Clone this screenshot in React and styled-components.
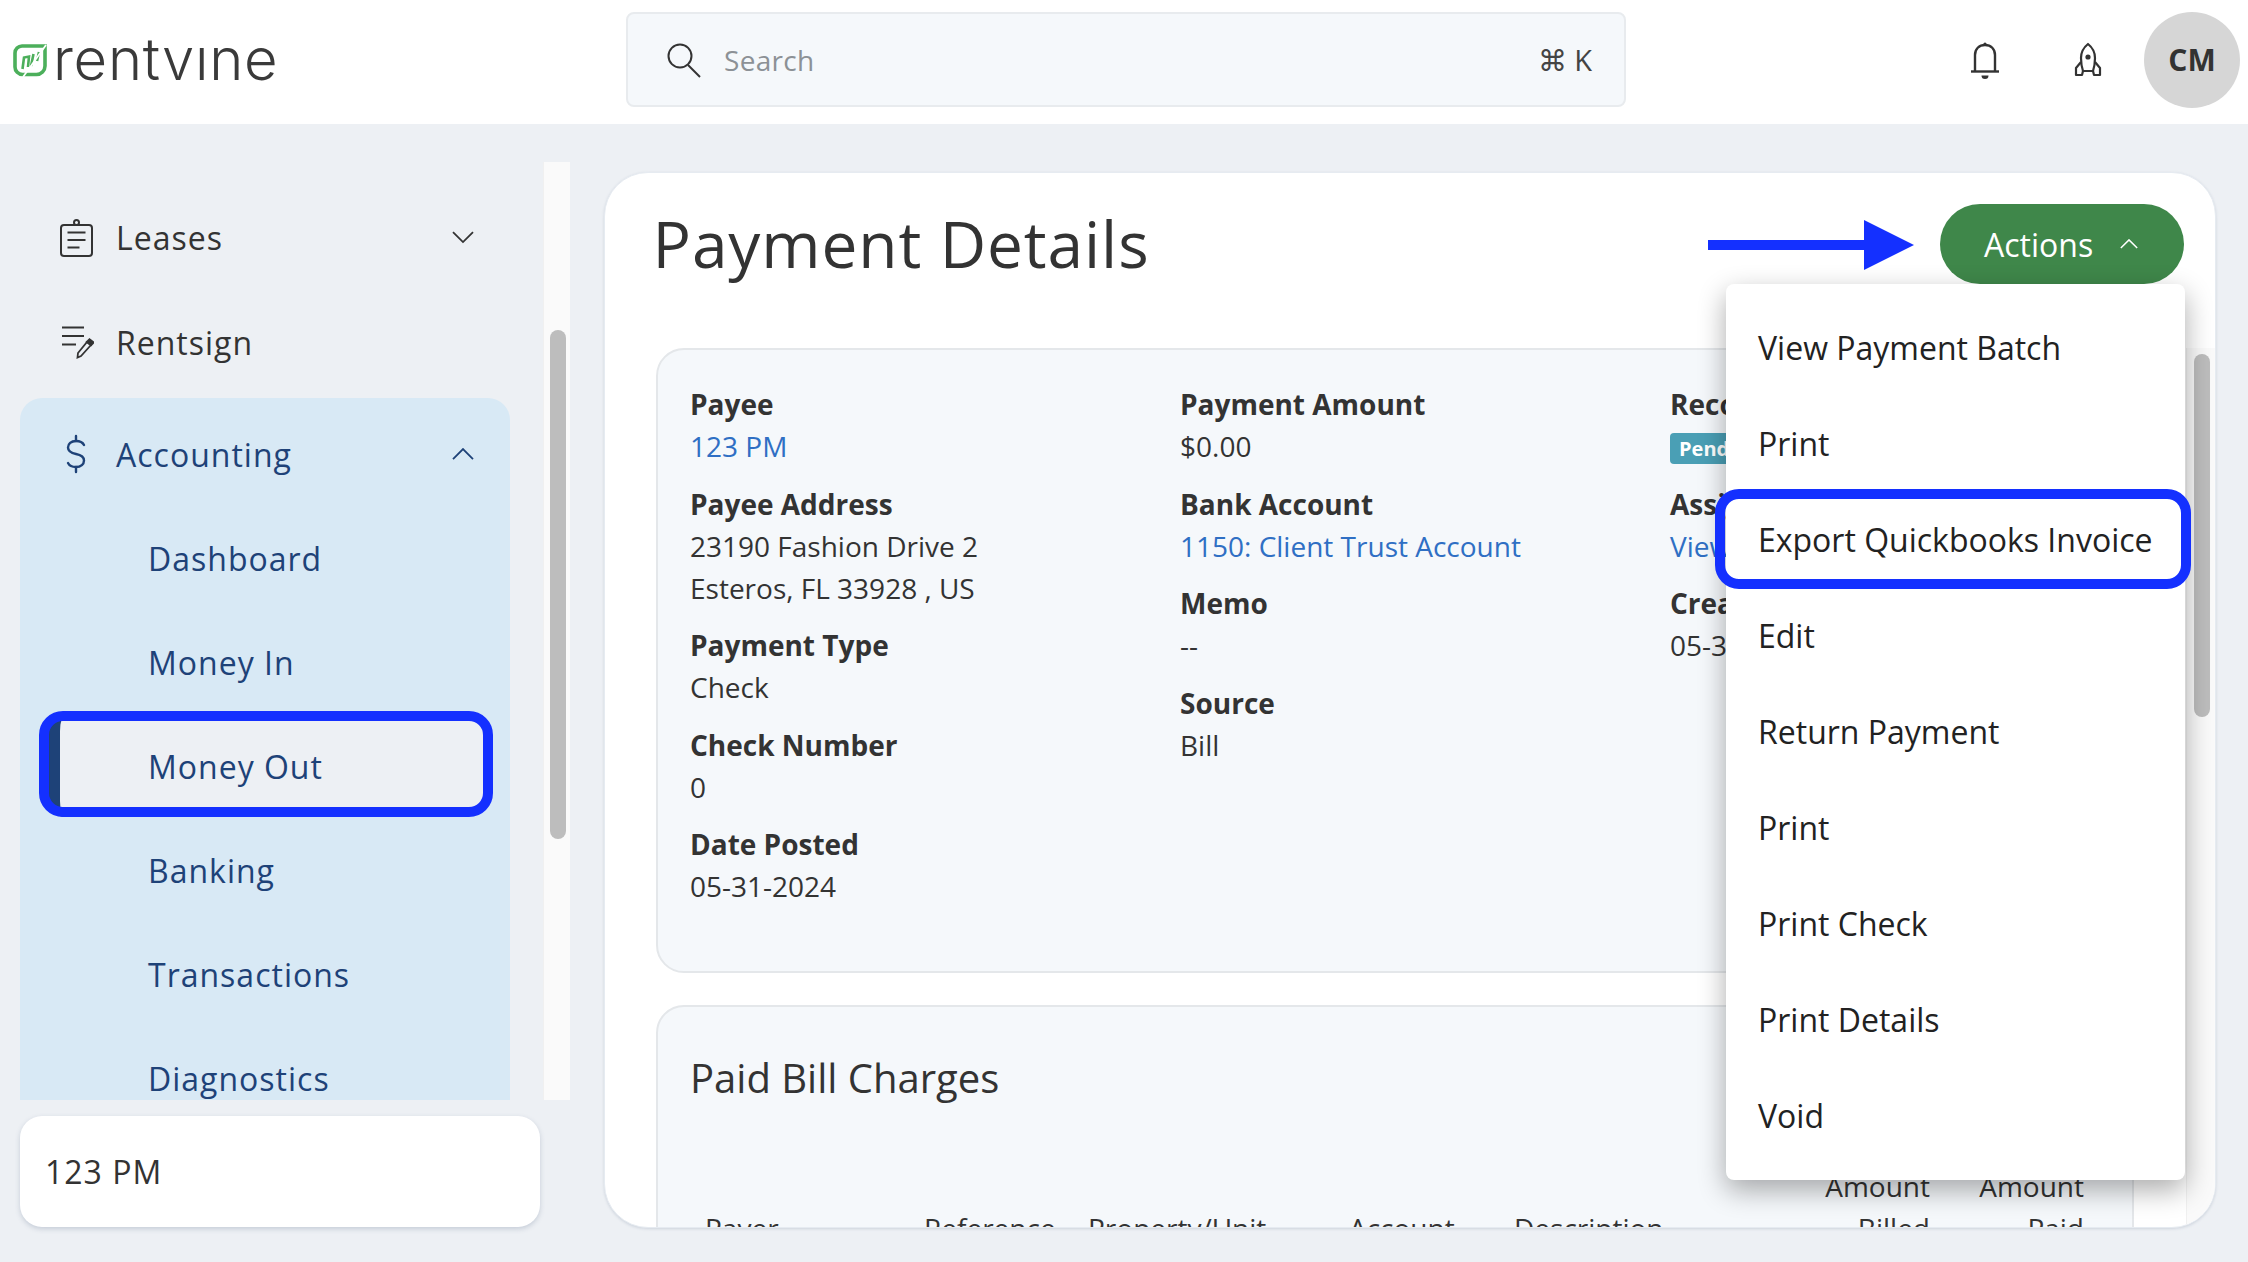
import React from "react";
import styled, { createGlobalStyle } from "styled-components";

const GlobalStyle = createGlobalStyle`
  * {
    box-sizing: border-box;
  }
  html,
  body {
    margin: 0;
    width: 2248px;
    height: 1262px;
    overflow: hidden;
    background: #edf0f4;
    color: #333;
    font-family: "Open Sans", "Noto Sans", sans-serif;
  }
`;

const LeafMark = () => (
  <svg width="34" height="36" viewBox="0 0 34 36" fill="none">
    <path
      d="M9 4H32V24a8.500 8.500 0 0 1-8.500 8.500H9.500A7.500 7.500 0 0 1 2 25V11a7 7 0 0 1 7-7Z"
      stroke="#4caf5b"
      strokeWidth="3.6"
    />
    <path d="M9.500 27 11 15.500l5-1L15 25" stroke="#4caf5b" strokeWidth="2.6" />
    <path d="M18 24l2.500-12M24 19l2-9" stroke="#4caf5b" strokeWidth="2.6" />
    <path d="M33 3 10 35" stroke="#fff" strokeWidth="1.8" />
  </svg>
);

const SearchIcon = () => (
  <svg width="36" height="36" viewBox="0 0 36 36" fill="none" stroke="#333" strokeWidth="2">
    <circle cx="14" cy="14" r="11.5" />
    <path d="M22 23 34 35" />
  </svg>
);

const BellIcon = () => (
  <svg width="30" height="38" viewBox="0 0 30 38" fill="none" stroke="#333" strokeWidth="2.4">
    <path d="M5 30V14C5 8 9 4 15 4s10 4 10 10v16" />
    <path d="M1 30.500h28" />
    <circle cx="15" cy="3" r="1.6" fill="#333" stroke="none" />
    <path d="M11.500 34.500h7a3.500 3.500 0 0 1-7 0Z" fill="#333" stroke="none" />
  </svg>
);

const RocketIcon = () => (
  <svg width="28" height="36" viewBox="0 0 28 36" fill="none" stroke="#333" strokeWidth="2.2" strokeLinejoin="round">
    <path d="M14 2c-5 4-7 9-7 14 0 5 1 10 2 13h10c1-3 2-8 2-13 0-5-2-10-7-14Z" />
    <path d="M7 20l-5 6v7h6l1-4M21 20l5 6v7h-6l-1-4" />
    <circle cx="14" cy="15" r="2.6" fill="#333" stroke="none" />
  </svg>
);

const LeasesIcon = () => (
  <svg width="36" height="40" viewBox="0 0 36 40" fill="none" stroke="#333" strokeWidth="2">
    <rect x="3" y="7" width="31" height="31" rx="3" />
    <circle cx="18.500" cy="4.500" r="2.500" />
    <path d="M9.500 14.500h18M9.500 22h18M9.500 29.500h12" strokeWidth="2.2" />
  </svg>
);

const RentsignIcon = () => (
  <svg width="36" height="36" viewBox="-2 0 36 36" fill="none" stroke="#333" strokeWidth="2.2">
    <path d="M2 2.500h22M2 11h22M2 19.500h14" />
    <path d="M18 28l9-11 4 3-10 11-3.500 1.500Z" strokeWidth="1.8" />
    <path d="M27 17l2.500-2.500 4 3-2.500 2.500Z" fill="#333" />
  </svg>
);

const DollarIcon = () => (
  <svg width="36" height="40" viewBox="-1 0 36 40" fill="none" stroke="#1e4278" strokeWidth="2.4" strokeLinecap="round">
    <path d="M17 2v5M17 33v5" />
    <path d="M25 11c-1-2-4-4-8-4-5 0-8 3-8 6.500S12 19 17 20s8 3 8 6.500S22 33 17 33c-4 0-7-2-8-4" />
  </svg>
);

const Chevron = ({ up, color = "#333", size = 22 }) => (
  <svg width={size} height={size * 0.55} viewBox="0 0 22 12" fill="none" stroke={color} strokeWidth="1.8">
    <path d={up ? "M1 11 11 1l10 10" : "M1 1l10 10L21 1"} />
  </svg>
);

const Page = styled.div`
  width: 2248px;
  height: 1262px;
  display: flex;
  flex-direction: column;
`;

const TopBar = styled.header`
  height: 124px;
  flex: none;
  display: flex;
  align-items: center;
  padding-bottom: 5px;
  background: #fff;
`;

const LogoBlock = styled.div`
  width: 626px;
  height: 100%;
  flex: none;
  display: flex;
  align-items: center;
  gap: 6px;
  padding-left: 13px;
`;

const LogoWord = styled.span`
  font-family: "Inter", "Lato", sans-serif;
  font-size: 58px;
  line-height: 62px;
  font-weight: 300;
  letter-spacing: 0.7px;
  color: #3a3a3a;
  margin-top: -1px;
`;

const SearchBox = styled.div`
  width: 1000px;
  height: 95px;
  flex: none;
  display: flex;
  align-items: center;
  padding: 0 32px 0 38px;
  background: #f5f8fb;
  border: 2px solid #e8ebee;
  border-radius: 8px;
`;

const SearchText = styled.span`
  flex: 1;
  margin-left: 22px;
  font-size: 28px;
  letter-spacing: 0.3px;
  color: #8c9196;
`;

const Shortcut = styled.span`
  font-size: 29px;
  color: #444;
`;

const TopActions = styled.div`
  flex: 1;
  display: flex;
  align-items: center;
  justify-content: flex-end;
  padding-right: 8px;
`;

const TopIcon = styled.span`
  display: flex;
  margin-right: ${(p) => p.$gap}px;
`;

const Avatar = styled.div`
  width: 96px;
  height: 96px;
  display: flex;
  align-items: center;
  justify-content: center;
  border-radius: 50%;
  background: #d6d6d6;
  font-size: 30px;
  font-weight: 700;
  color: #333;
`;

const Body = styled.div`
  flex: 1;
  display: flex;
  min-height: 0;
`;

const Sidebar = styled.aside`
  width: 604px;
  flex: none;
  padding: 38px 0 0 20px;
`;

const NavScroller = styled.div`
  height: 938px;
  display: flex;
  gap: 33px;
`;

const NavList = styled.nav`
  width: 490px;
  flex: none;
  padding-top: 23px;
  overflow: hidden;
`;

const NavRow = styled.div`
  height: ${(p) => (p.$accent ? 104.5 : 105)}px;
  display: flex;
  align-items: center;
  padding: 0 36px 0 38px;
  font-size: 32px;
  letter-spacing: 1px;
  color: ${(p) => (p.$accent ? "#1e4278" : "#333")};
`;

const NavIcon = styled.span`
  width: 58px;
  flex: none;
  display: flex;
`;

const NavLabel = styled.span`
  flex: 1;
`;

const NavGroup = styled.div`
  margin-top: 3px;
  padding-top: 4px;
  background: #d8e9f5;
  border-radius: 22px 22px 0 0;
`;

const SubRow = styled.div`
  position: relative;
  height: ${(p) => (p.$active ? 102 : 104)}px;
  display: flex;
  align-items: center;
  padding: ${(p) => (p.$active ? "2px 0 0 88px" : "0 0 0 128px")};
  margin: 0 ${(p) => (p.$active ? 27 : 0)}px ${(p) => (p.$active ? 2 : 0)}px ${(p) => (p.$active ? 29 : 0)}px;
  font-size: 32px;
  letter-spacing: 1px;
  color: #1e4278;
  background: ${(p) => (p.$active ? "#edf0f4" : "transparent")};
  border-left: ${(p) => (p.$active ? "11px solid #1e4278" : "none")};
  border-radius: ${(p) => (p.$active ? 16 : 0)}px;
`;

const CalloutRing = styled.span`
  position: absolute;
  top: ${(p) => p.$top}px;
  right: ${(p) => p.$right}px;
  bottom: ${(p) => p.$bottom}px;
  left: ${(p) => p.$left}px;
  border: 10px solid #1430ff;
  border-radius: 24px;
  pointer-events: none;
`;

const ScrollTrack = styled.div`
  width: ${(p) => p.$width}px;
  flex: none;
  padding: ${(p) => p.$top}px 0 0 ${(p) => p.$left}px;
  background: #fafafa;
  border-left: 1px solid #f0f0f0;
`;

const ScrollThumb = styled.div`
  width: 16px;
  height: ${(p) => p.$height}px;
  border-radius: 8px;
  background: #bdbdbd;
`;

const UserCard = styled.div`
  width: 520px;
  height: 111px;
  margin-top: 16px;
  display: flex;
  align-items: center;
  padding-left: 25px;
  background: #fff;
  border-radius: 22px;
  box-shadow: 0 2px 5px rgba(80, 100, 130, 0.25);
  font-size: 32px;
  letter-spacing: 1px;
  color: #333;
`;

const MainCard = styled.main`
  width: 1612px;
  height: 1056px;
  margin-top: 48px;
  display: flex;
  flex-direction: column;
  background: #fff;
  border: 1px solid #e6ebf1;
  border-radius: 44px;
  box-shadow: 0 1px 3px rgba(80, 100, 130, 0.2);
  overflow: hidden;
`;

const CardHead = styled.div`
  height: 175px;
  flex: none;
  display: flex;
  justify-content: space-between;
  align-items: flex-start;
  padding: 31px 31px 0 47.500px;
`;

const PageTitle = styled.h1`
  margin: -4px 0 0;
  font-size: 64px;
  line-height: 88px;
  font-weight: 400;
  letter-spacing: 0.9px;
  color: #333;
`;

const ActionsWrap = styled.div`
  position: relative;
  width: 244px;
  height: 80px;
`;

const ActionsButton = styled.button`
  width: 100%;
  height: 100%;
  display: flex;
  align-items: center;
  gap: 27px;
  padding: 0 0 0 44px;
  border: 0;
  border-radius: 40px;
  background: #3f874a;
  color: #fff;
  font-family: inherit;
  font-size: 32px;
`;

const ArrowMark = styled.svg`
  position: absolute;
  top: 16px;
  left: -232px;
`;

const Menu = styled.div`
  position: absolute;
  top: 80px;
  right: -1px;
  width: 459px;
  padding: 15px 0 17px;
  background: #fff;
  border-radius: 8px;
  box-shadow: 0 10px 28px rgba(0, 0, 0, 0.33);
  z-index: 2;
`;

const MenuItem = styled.div`
  position: relative;
  height: 96px;
  display: flex;
  align-items: center;
  padding-left: 32px;
  font-size: 32px;
  color: #222;
`;

const CardBody = styled.div`
  flex: 1;
  display: flex;
  min-height: 0;
`;

const Content = styled.div`
  flex: 1;
  padding: 0 52px 0 51px;
  overflow: hidden;
`;

const InfoPanel = styled.section`
  height: 625px;
  display: grid;
  grid-template-columns: repeat(3, 490px);
  padding: 33px 0 0 32px;
  background: #f5f8fb;
  border: 2px solid #e4e7ea;
  border-radius: 28px;
`;

const Field = styled.div`
  margin-bottom: 15.500px;
`;

const FieldLabel = styled.div`
  font-size: 28px;
  line-height: 42px;
  font-weight: 700;
  color: #333;
`;

const FieldValue = styled.div`
  font-size: 28px;
  line-height: 42px;
  color: ${(p) => (p.$link ? "#2f6fc4" : "#333")};
`;

const BadgeLine = styled.div`
  height: 42px;
  padding-top: 8px;
`;

const StatusBadge = styled.span`
  display: inline-block;
  height: 31px;
  padding: 0 9px;
  background: #4a9fb5;
  border-radius: 4px;
  font-size: 20px;
  line-height: 31px;
  font-weight: 700;
  color: #fff;
  vertical-align: top;
`;

const ChargesPanel = styled.section`
  height: 400px;
  margin-top: 32px;
  padding: 40.500px 0 0 32px;
  background: #f5f8fb;
  border: 2px solid #e4e7ea;
  border-radius: 28px;
`;

const ChargesTitle = styled.h2`
  margin: 0 0 57px;
  font-size: 40px;
  line-height: 60px;
  font-weight: 400;
  color: #333;
`;

const ChargesHead = styled.div`
  display: grid;
  grid-template-columns: 219px 164px 261px 165px 300px 146px 154px;
  align-items: end;
`;

const HeadCell = styled.div`
  padding: 0 15px;
  font-size: 28px;
  line-height: 42px;
  color: #333;
  text-align: ${(p) => (p.$right ? "right" : "left")};
`;

const leftFields = [
  { label: "Payee", values: ["123 PM"], link: true },
  { label: "Payee Address", values: ["23190 Fashion Drive 2", "Esteros, FL 33928 , US"] },
  { label: "Payment Type", values: ["Check"] },
  { label: "Check Number", values: ["0"] },
  { label: "Date Posted", values: ["05-31-2024"] },
];

const middleFields = [
  { label: "Payment Amount", values: ["$0.00"] },
  { label: "Bank Account", values: ["1150: Client Trust Account"], link: true },
  { label: "Memo", values: ["--"] },
  { label: "Source", values: ["Bill"] },
];

const rightFields = [
  { label: "Assigned To", values: ["View"], link: true },
  { label: "Created", values: ["05-31-2024"] },
];

const menuItems = [
  "View Payment Batch",
  "Print",
  "Export Quickbooks Invoice",
  "Edit",
  "Return Payment",
  "Print",
  "Print Check",
  "Print Details",
  "Void",
];

const subItems = ["Dashboard", "Money In", "Money Out", "Banking", "Transactions", "Diagnostics"];

const FieldList = ({ fields }) =>
  fields.map((field) => (
    <Field key={field.label}>
      <FieldLabel>{field.label}</FieldLabel>
      {field.values.map((value) => (
        <FieldValue key={value} $link={field.link}>
          {value}
        </FieldValue>
      ))}
    </Field>
  ));

export default function App() {
  return (
    <Page>
      <GlobalStyle />
      <TopBar>
        <LogoBlock>
          <LeafMark />
          <LogoWord>rentvıne</LogoWord>
        </LogoBlock>
        <SearchBox>
          <SearchIcon />
          <SearchText>Search</SearchText>
          <Shortcut>⌘ K</Shortcut>
        </SearchBox>
        <TopActions>
          <TopIcon $gap={74}>
            <BellIcon />
          </TopIcon>
          <TopIcon $gap={42}>
            <RocketIcon />
          </TopIcon>
          <Avatar>CM</Avatar>
        </TopActions>
      </TopBar>
      <Body>
        <Sidebar>
          <NavScroller>
            <NavList>
              <NavRow>
                <NavIcon>
                  <LeasesIcon />
                </NavIcon>
                <NavLabel>Leases</NavLabel>
                <Chevron />
              </NavRow>
              <NavRow>
                <NavIcon>
                  <RentsignIcon />
                </NavIcon>
                <NavLabel>Rentsign</NavLabel>
              </NavRow>
              <NavGroup>
                <NavRow $accent>
                  <NavIcon>
                    <DollarIcon />
                  </NavIcon>
                  <NavLabel>Accounting</NavLabel>
                  <Chevron up color="#1e4278" />
                </NavRow>
                {subItems.map((item) => (
                  <SubRow key={item} $active={item === "Money Out"}>
                    {item}
                    {item === "Money Out" && <CalloutRing $top={-4} $right={-10} $bottom={0} $left={-21} />}
                  </SubRow>
                ))}
              </NavGroup>
            </NavList>
            <ScrollTrack $width={27} $top={168} $left={6}>
              <ScrollThumb $height={509} />
            </ScrollTrack>
          </NavScroller>
          <UserCard>123 PM</UserCard>
        </Sidebar>
        <MainCard>
          <CardHead>
            <PageTitle>Payment Details</PageTitle>
            <ActionsWrap>
              <ArrowMark width="206" height="50" viewBox="0 0 206 50">
                <path d="M0 20H156V0L206 25 156 50V30H0Z" fill="#1430ff" />
              </ArrowMark>
              <ActionsButton>
                Actions
                <Chevron up color="#fff" size={18} />
              </ActionsButton>
              <Menu>
                {menuItems.map((item, i) => (
                  <MenuItem key={item + i}>
                    {item}
                    {item === "Export Quickbooks Invoice" && (
                      <CalloutRing $top={-2} $right={-6} $bottom={-2} $left={-11} />
                    )}
                  </MenuItem>
                ))}
              </Menu>
            </ActionsWrap>
          </CardHead>
          <CardBody>
            <Content>
              <InfoPanel>
                <div>
                  <FieldList fields={leftFields} />
                </div>
                <div>
                  <FieldList fields={middleFields} />
                </div>
                <div>
                  <Field>
                    <FieldLabel>Record Status</FieldLabel>
                    <BadgeLine>
                      <StatusBadge>Pending</StatusBadge>
                    </BadgeLine>
                  </Field>
                  <FieldList fields={rightFields} />
                </div>
              </InfoPanel>
              <ChargesPanel>
                <ChargesTitle>Paid Bill Charges</ChargesTitle>
                <ChargesHead>
                  <HeadCell>Payer</HeadCell>
                  <HeadCell>Reference</HeadCell>
                  <HeadCell>Property/Unit</HeadCell>
                  <HeadCell>Account</HeadCell>
                  <HeadCell>Description</HeadCell>
                  <HeadCell $right>Amount Billed</HeadCell>
                  <HeadCell $right>Amount Paid</HeadCell>
                </ChargesHead>
              </ChargesPanel>
            </Content>
            <ScrollTrack $width={29} $top={6} $left={7}>
              <ScrollThumb $height={363} />
            </ScrollTrack>
          </CardBody>
        </MainCard>
      </Body>
    </Page>
  );
}
